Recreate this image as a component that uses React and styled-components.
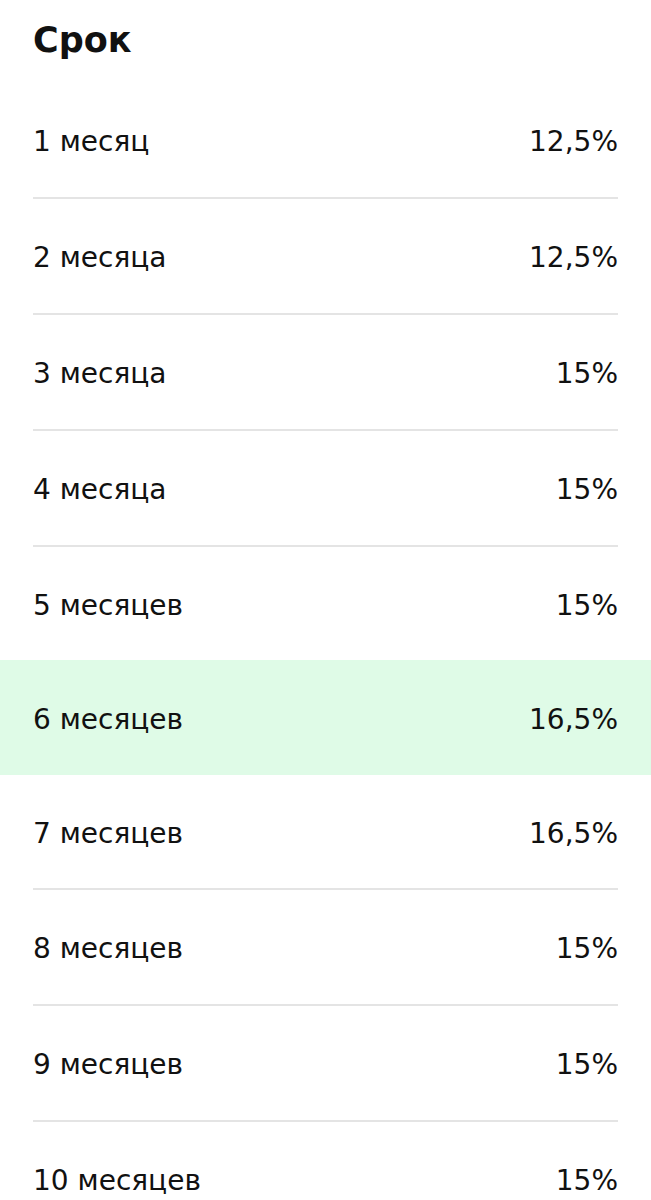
import styled, { createGlobalStyle } from 'styled-components'

const GlobalStyle = createGlobalStyle`
  body {
    margin: 0;
    background: #ffffff;
    font-family: "DejaVu Sans", "Noto Sans", sans-serif;
    color: #111111;
  }
`

const Page = styled.div`
  padding: 0 33px;
  overflow: hidden;
`

const Title = styled.h2`
  margin: 0;
  height: 83px;
  display: flex;
  align-items: center;
  padding-bottom: 4px;
  box-sizing: border-box;
  font-size: 35px;
  font-weight: 700;
`

const Row = styled.div`
  display: flex;
  justify-content: space-between;
  align-items: center;
  box-sizing: border-box;
  height: 116px;
  padding-top: 3px;
  font-size: 28px;
  border-bottom: 2px solid #e4e4e4;

  &.before-active {
    height: 113px;
    border-bottom: none;
  }

  &.after-active {
    height: 115px;
  }

  &.active {
    height: 115px;
    margin: 0 -33px;
    padding: 3px 33px 0;
    background: #dffbe7;
    border-bottom: none;
  }
`

const Term = styled.span``

const Rate = styled.span``

const rows = [
  ['1 месяц', '12,5%'],
  ['2 месяца', '12,5%'],
  ['3 месяца', '15%'],
  ['4 месяца', '15%'],
  ['5 месяцев', '15%'],
  ['6 месяцев', '16,5%'],
  ['7 месяцев', '16,5%'],
  ['8 месяцев', '15%'],
  ['9 месяцев', '15%'],
  ['10 месяцев', '15%'],
]

const activeIndex = 5

function rowClass(i) {
  if (i === activeIndex) return 'active'
  if (i === activeIndex - 1) return 'before-active'
  if (i === activeIndex + 1) return 'after-active'
  return undefined
}

export default function App() {
  return (
    <>
      <GlobalStyle />
      <Page>
        <Title>Срок</Title>
        {rows.map(([term, rate], i) => (
          <Row key={term} className={rowClass(i)}>
            <Term>{term}</Term>
            <Rate>{rate}</Rate>
          </Row>
        ))}
      </Page>
    </>
  )
}
